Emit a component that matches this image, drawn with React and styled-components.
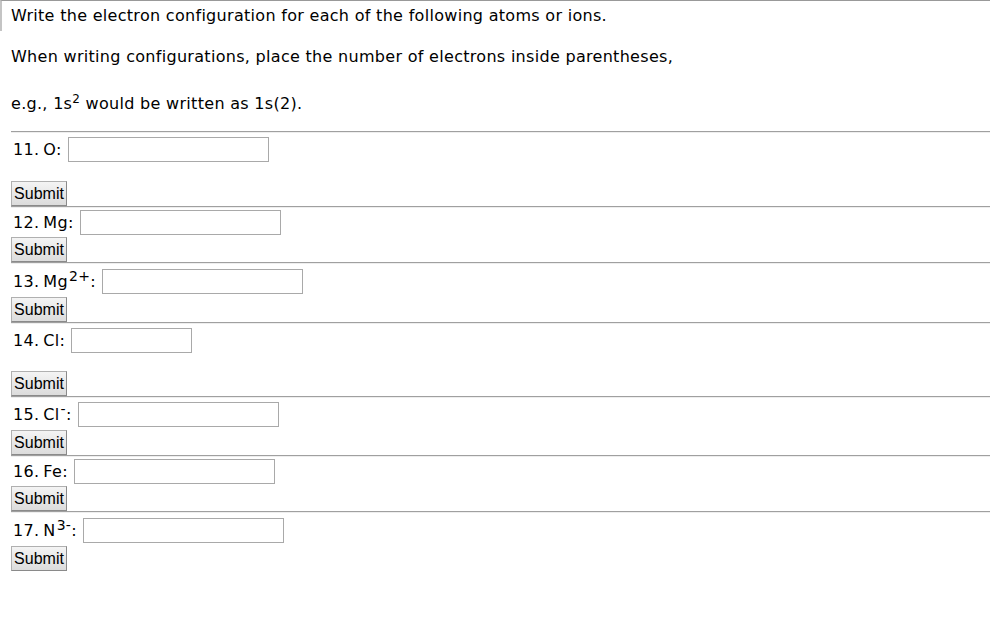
import React from "react";
import styled, { createGlobalStyle } from "styled-components";

const GlobalStyle = createGlobalStyle`
  body {
    margin: 0;
    background: #fff;
    color: #000;
    font-family: "DejaVu Sans", Verdana, sans-serif;
    font-size: 16px;
    letter-spacing: 0.3px;
  }
`;

const items = [
  { num: 11, sym: "O", top: 4, gap: 19 },
  { num: 12, sym: "Mg", top: 2, gap: 2 },
  { num: 13, sym: "Mg", sup: "2+", top: 5, gap: 3 },
  { num: 14, sym: "Cl", top: 4, gap: 18, small: true },
  { num: 15, sym: "Cl", sup: "-", top: 4, gap: 3 },
  { num: 16, sym: "Fe", top: 2, gap: 2 },
  { num: 17, sym: "N", sup: "3-", top: 5, gap: 3 },
];

const App = () => {
  return (
    <Page>
      <GlobalStyle />
      <Header>Write the electron configuration for each of the following atoms or ions.</Header>
      <Body>
        <Para>
          When writing configurations, place the number of electrons inside parentheses,
        </Para>
        <Para>
          e.g., 1s<sup>2</sup> would be written as 1s(2).
        </Para>
        <TopRule />
        {items.map((item) => (
          <Item key={item.num}>
            <Row $top={item.top}>
              <Num>{item.num}.</Num>
              <Sym>
                {item.sym}
                {item.sup && <Sup>{item.sup}</Sup>}:
              </Sym>
              <Answer type="text" $small={item.small} />
            </Row>
            <Submit $gap={item.gap}>Submit</Submit>
            {item.num !== 17 && <Rule />}
          </Item>
        ))}
      </Body>
    </Page>
  );
};

const Page = styled.div`
  width: 990px;
  min-height: 627px;
`;

const Header = styled.div`
  border-top: 1px solid #999;
  border-left: 2px solid #c4c4c4;
  height: 31px;
  box-sizing: border-box;
  padding: 5px 0 0 9px;
  line-height: 19px;
`;

const Body = styled.div`
  padding-left: 11px;
`;

const Para = styled.p`
  margin: 16px 0 0;
  line-height: 19px;

  & + & {
    margin-top: 28px;
  }

  sup {
    font-size: 12px;
    line-height: 0;
  }
`;

const Rule = styled.hr`
  margin: 0;
  height: 0;
  border: 0;
  border-top: 1px solid #a0a0a0;
  border-bottom: 1px solid #eee;
`;

const TopRule = styled(Rule)`
  margin-top: 18px;
`;

const Item = styled.div``;

const Row = styled.div`
  display: flex;
  align-items: center;
  height: 25px;
  margin-top: ${(p) => p.$top}px;
  padding-left: 2px;
`;

const Num = styled.span`
  margin-right: 4px;
`;

const Sym = styled.span`
  margin-right: 6px;
`;

const Sup = styled.sup`
  font-size: 14px;
  line-height: 0;
  margin-left: 1px;
`;

const Answer = styled.input`
  width: ${(p) => (p.$small ? 121 : 201)}px;
  height: 25px;
  box-sizing: border-box;
  border: 1px solid #a9a9a9;
  padding: 1px 2px;
  font: inherit;
`;

const Submit = styled.button`
  display: block;
  margin-top: ${(p) => p.$gap}px;
  width: 56px;
  height: 25px;
  padding: 0;
  font-family: "Liberation Sans", Arial, sans-serif;
  font-size: 16px;
  letter-spacing: 0;
  color: #000;
  border: 1px solid #b0b0b0;
  border-right-color: #8a8a8a;
  border-bottom-color: #8a8a8a;
  border-radius: 0;
  background: linear-gradient(#f4f4f4, #dcdcdc);
`;

export default App;
